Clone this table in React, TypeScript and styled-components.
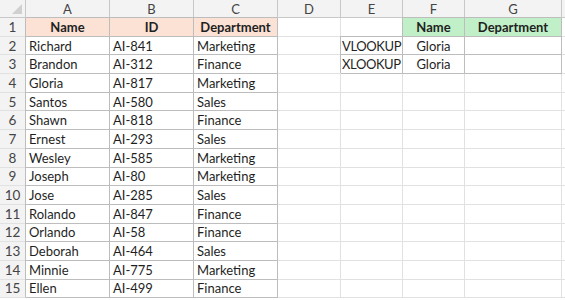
import React from 'react';
import styled, { createGlobalStyle, css } from 'styled-components';

const GlobalStyle = createGlobalStyle`
  html, body {
    margin: 0;
    padding: 0;
    background: #ffffff;
  }

  body {
    font-family: 'Lato', 'Liberation Sans', sans-serif;
    overflow: hidden;
  }
`;

const colors = {
  grid: '#e1e1e1',
  border: '#bdbdbd',
  header: '#f3f3f3',
  headerLine: '#c8c8c8',
  peach: '#fbe2d5',
  green: '#c1f0c8',
  text: '#1f1f1f',
};

const Sheet = styled.div`
  display: grid;
  grid-template-columns: 26px 84px 84px 84px 63px 62px 62px 97px 1fr;
  grid-template-rows: 18px repeat(15, 18.7px);
  width: 565px;
`;

const Corner = styled.div`
  position: relative;
  background: ${colors.header};
  border-right: 1px solid ${colors.headerLine};
  border-bottom: 1px solid ${colors.headerLine};

  &::after {
    content: '';
    position: absolute;
    right: 3px;
    bottom: 3px;
    border-style: solid;
    border-width: 0 0 10px 10px;
    border-color: transparent transparent #d0d0d0 transparent;
  }
`;

const ColHead = styled.div`
  display: flex;
  align-items: center;
  justify-content: center;
  background: ${colors.header};
  border-right: 1px solid ${colors.headerLine};
  border-bottom: 1px solid ${colors.headerLine};
  color: #444;
  font-size: 13px;
`;

const RowHead = styled.div`
  display: flex;
  align-items: center;
  justify-content: center;
  background: ${colors.header};
  border-right: 1px solid ${colors.headerLine};
  border-bottom: 1px solid ${colors.grid};
  color: #444;
  font-size: 13.5px;
`;

type CellProps = {
  $fill?: string;
  $bold?: boolean;
  $center?: boolean;
  $boxed?: boolean;
  $tight?: boolean;
};

const Cell = styled.div<CellProps>`
  display: flex;
  align-items: center;
  justify-content: ${(p) => (p.$center ? 'center' : 'flex-start')};
  padding: 0 ${(p) => (p.$tight ? '1px' : '3px')};
  overflow: hidden;
  white-space: nowrap;

  background: ${(p) => p.$fill || '#ffffff'};
  border-right: 1px solid ${colors.grid};
  border-bottom: 1px solid ${colors.grid};

  color: ${colors.text};
  font-size: 13px;
  font-weight: ${(p) => (p.$bold ? 700 : 400)};
  letter-spacing: ${(p) => (p.$tight ? '-0.4px' : 'normal')};

  ${(p) =>
    p.$boxed &&
    css`
      border-right-color: ${colors.border};
      border-bottom-color: ${colors.border};
      box-shadow: -1px -1px 0 0 ${colors.border};
    `}
`;

const columns = ['A', 'B', 'C', 'D', 'E', 'F', 'G'];

const people: [string, string, string][] = [
  ['Richard', 'AI-841', 'Marketing'],
  ['Brandon', 'AI-312', 'Finance'],
  ['Gloria', 'AI-817', 'Marketing'],
  ['Santos', 'AI-580', 'Sales'],
  ['Shawn', 'AI-818', 'Finance'],
  ['Ernest', 'AI-293', 'Sales'],
  ['Wesley', 'AI-585', 'Marketing'],
  ['Joseph', 'AI-80', 'Marketing'],
  ['Jose', 'AI-285', 'Sales'],
  ['Rolando', 'AI-847', 'Finance'],
  ['Orlando', 'AI-58', 'Finance'],
  ['Deborah', 'AI-464', 'Sales'],
  ['Minnie', 'AI-775', 'Marketing'],
  ['Ellen', 'AI-499', 'Finance'],
];

const lookups = ['VLOOKUP', 'XLOOKUP'];

function App() {
  return (
    <>
      <GlobalStyle />
      <Sheet>
        <Corner />
        {columns.map((c) => (
          <ColHead key={c}>{c}</ColHead>
        ))}
        <ColHead />

        <RowHead>1</RowHead>
        <Cell $fill={colors.peach} $bold $center $boxed>Name</Cell>
        <Cell $fill={colors.peach} $bold $center $boxed>ID</Cell>
        <Cell $fill={colors.peach} $bold $center $boxed>Department</Cell>
        <Cell />
        <Cell />
        <Cell $fill={colors.green} $bold $center $boxed>Name</Cell>
        <Cell $fill={colors.green} $bold $center $boxed>Department</Cell>
        <Cell />

        {people.map(([name, id, dept], i) => {
          const lookup = lookups[i];
          return (
            <React.Fragment key={name}>
              <RowHead>{i + 2}</RowHead>
              <Cell $boxed>{name}</Cell>
              <Cell $boxed>{id}</Cell>
              <Cell $boxed>{dept}</Cell>
              <Cell />
              {lookup ? (
                <>
                  <Cell $boxed $tight>{lookup}</Cell>
                  <Cell $boxed $center>Gloria</Cell>
                  <Cell $boxed />
                </>
              ) : (
                <>
                  <Cell />
                  <Cell />
                  <Cell />
                </>
              )}
              <Cell />
            </React.Fragment>
          );
        })}
      </Sheet>
    </>
  );
}

export default App;
